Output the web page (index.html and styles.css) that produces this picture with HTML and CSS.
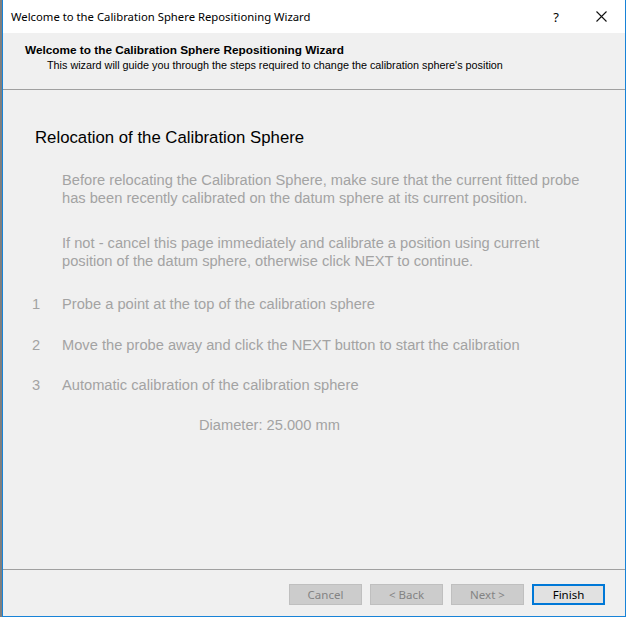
FILE: index.html
```html
<!DOCTYPE html>
<html>
<head>
<meta charset="utf-8">
<link rel="stylesheet" href="styles.css">
</head>
<body>
<div class="window">
  <div class="titlebar">
    <span class="title">Welcome to the Calibration Sphere Repositioning Wizard</span>
    <span class="tb-help">?</span>
    <span class="tb-close"><svg width="11" height="11" viewBox="0 0 11 11"><path d="M0.5 0.5 L10.5 10.5 M10.5 0.5 L0.5 10.5" stroke="#111" stroke-width="1.1" fill="none"/></svg></span>
  </div>
  <div class="header">
    <div class="h-title">Welcome to the Calibration Sphere Repositioning Wizard</div>
    <div class="h-sub">This wizard will guide you through the steps required to change the calibration sphere's position</div>
  </div>
  <div class="content">
    <div class="heading">Relocation of the Calibration Sphere</div>
    <p class="para p1">Before relocating the Calibration Sphere, make sure that the current fitted probe<br>has been recently calibrated on the datum sphere at its current position.</p>
    <p class="para p2">If not - cancel this page immediately and calibrate a position using current<br>position of the datum sphere, otherwise click NEXT to continue.</p>
    <div class="step s1"><span class="num">1</span><span>Probe a point at the top of the calibration sphere</span></div>
    <div class="step s2"><span class="num">2</span><span>Move the probe away and click the NEXT button to start the calibration</span></div>
    <div class="step s3"><span class="num">3</span><span>Automatic calibration of the calibration sphere</span></div>
    <div class="diameter">Diameter: 25.000 mm</div>
  </div>
  <div class="footer">
    <button class="btn disabled">Cancel</button>
    <button class="btn disabled">&lt; Back</button>
    <button class="btn disabled">Next &gt;</button>
    <button class="btn default">Finish</button>
  </div>
</div>
</body>
</html>
```

FILE: styles.css
```css
html, body {
  margin: 0;
  padding: 0;
}
body {
  width: 626px;
  height: 617px;
  background: #7f7f7f;
  overflow: hidden;
}
.window {
  margin-left: 2px;
  width: 622px;
  height: 616px;
  border: 1px solid #1883d7;
  border-top: none;
  background: #f0f0f0;
  display: flex;
  flex-direction: column;
}
.titlebar {
  height: 33px;
  background: #fff;
  display: flex;
  align-items: center;
  font-family: "Noto Sans", "Liberation Sans", sans-serif;
  font-size: 11.3px;
  color: #000;
}
.title {
  padding-left: 8px;
  flex: 1;
  padding-bottom: 1px;
}
.tb-help {
  width: 12px;
  margin-right: 34px;
  font-size: 13px;
  text-align: center;
}
.tb-close {
  display: flex;
  margin-right: 18px;
}
.header {
  height: 57px;
  border-bottom: 1px solid #a0a0a0;
  font-family: "Liberation Sans", Arial, sans-serif;
  font-size: 11px;
  color: #000;
  padding-left: 22px;
  box-sizing: border-box;
  padding-top: 10px;
}
.h-title {
  font-weight: bold;
  font-size: 11.8px;
  line-height: 14px;
}
.h-sub {
  padding-left: 22px;
  font-size: 10.8px;
  line-height: 14px;
  margin-top: 1px;
}
.content {
  flex: 1;
  border-bottom: 1px solid #a0a0a0;
  font-family: "Liberation Sans", Arial, sans-serif;
  color: #a3a3a3;
  font-size: 14.67px;
}
.heading {
  color: #000;
  font-size: 16.75px;
  line-height: 18px;
  margin: 39px 0 0 32px;
}
.para {
  margin: 0;
  padding-left: 59px;
  line-height: 18px;
}
.p1 { margin-top: 24px; }
.p2 { margin-top: 27px; }
.step {
  display: flex;
  line-height: 18px;
}
.step .num {
  width: 30px;
  padding-left: 29px;
}
.s1 { margin-top: 25px; }
.s2 { margin-top: 23px; }
.s3 { margin-top: 22px; }
.diameter {
  padding-left: 196px;
  line-height: 18px;
  margin-top: 22px;
}
.footer {
  height: 46px;
  display: flex;
  justify-content: flex-end;
  align-items: flex-start;
  gap: 8px;
  padding: 14px 20px 0 0;
  box-sizing: border-box;
}
.btn {
  width: 73px;
  height: 21px;
  box-sizing: border-box;
  font-family: "Noto Sans", "Liberation Sans", sans-serif;
  font-size: 11.5px;
  padding: 0;
  margin: 0;
}
.btn.disabled {
  background: #cccccc;
  border: 1px solid #bfbfbf;
  color: #838383;
}
.btn.default {
  background: #e1e1e1;
  border: 2px solid #0078d7;
  color: #000;
}
```
